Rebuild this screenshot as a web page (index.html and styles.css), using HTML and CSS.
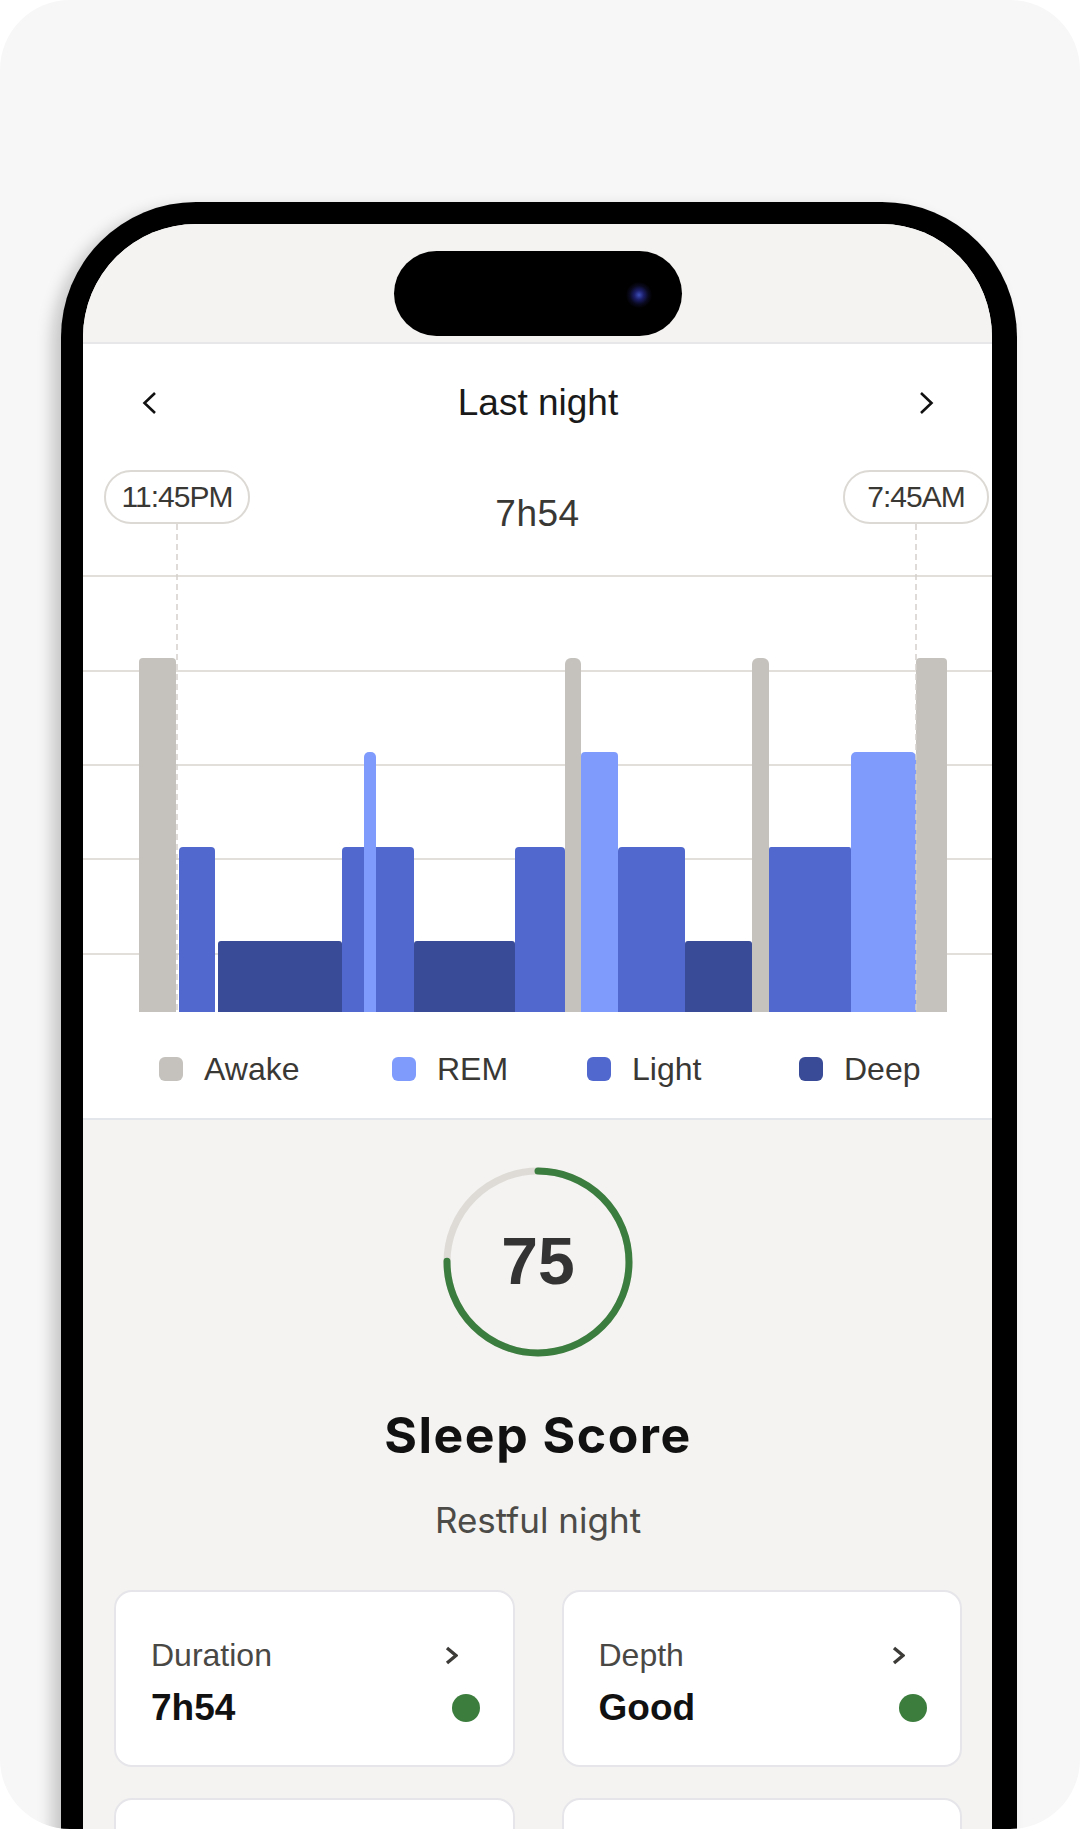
FILE: index.html
```html
<!DOCTYPE html>
<html lang="en">
<head>
    <meta charset="UTF-8">
    <meta name="viewport" content="width=device-width, initial-scale=1.0">
    <title>Sleep - Last night</title>
    <link rel="stylesheet" href="styles.css">
</head>
<body>
    <div class="page">
        <div class="phone">
            <div class="status-bar">
                <div class="island"><span class="camera"></span></div>
            </div>

            <section class="night">
                <div class="nav">
                    <svg class="nav-arrow" width="15" height="24" viewBox="0 0 15 24"><path d="M13 2 L2.5 12 L13 22"/></svg>
                    <h1 class="nav-title">Last night</h1>
                    <svg class="nav-arrow" width="15" height="24" viewBox="0 0 15 24"><path d="M2 2 L12.5 12 L2 22"/></svg>
                </div>

                <div class="times">
                    <span class="time-pill time-start">11:45PM</span>
                    <span class="total">7h54</span>
                    <span class="time-pill time-end">7:45AM</span>
                </div>

                <!-- hypnogram: levels awake / rem / light / deep -->
                <svg class="hypnogram" width="909" height="496" viewBox="0 0 909 496">
                    <defs>
                        <clipPath id="plot"><rect x="0" y="0" width="909" height="488"/></clipPath>
                    </defs>
                    <g class="grid-lines">
                        <line x1="0" y1="52" x2="909" y2="52"/>
                        <line x1="0" y1="147" x2="909" y2="147"/>
                        <line x1="0" y1="241" x2="909" y2="241"/>
                        <line x1="0" y1="335" x2="909" y2="335"/>
                        <line x1="0" y1="430" x2="909" y2="430"/>
                    </g>
                    <g clip-path="url(#plot)">
                        <rect class="bar-awake" x="56" y="134" width="37" height="360" rx="4"/>
                        <rect class="bar-light" x="96" y="323" width="36" height="171" rx="4"/>
                        <rect class="bar-deep" x="135" y="417" width="124" height="77" rx="3"/>
                        <rect class="bar-light" x="259" y="323" width="72" height="171" rx="4"/>
                        <rect class="bar-rem" x="281" y="228" width="12" height="266" rx="5"/>
                        <rect class="bar-deep" x="331" y="417" width="101" height="77" rx="3"/>
                        <rect class="bar-light" x="432" y="323" width="50" height="171" rx="4"/>
                        <rect class="bar-awake" x="482" y="134" width="16" height="360" rx="6"/>
                        <rect class="bar-rem" x="498" y="228" width="37" height="266" rx="4"/>
                        <rect class="bar-light" x="535" y="323" width="67" height="171" rx="4"/>
                        <rect class="bar-deep" x="602" y="417" width="67" height="77" rx="3"/>
                        <rect class="bar-awake" x="669" y="134" width="17" height="360" rx="6"/>
                        <rect class="bar-light" x="686" y="323" width="82" height="171" rx="2"/>
                        <rect class="bar-rem" x="768" y="228" width="65" height="266" rx="5"/>
                        <rect class="bar-awake" x="833" y="134" width="31" height="360" rx="4"/>
                    </g>
                    <g class="time-marks">
                        <line x1="94" y1="0" x2="94" y2="488"/>
                        <line x1="833" y1="0" x2="833" y2="488"/>
                    </g>
                </svg>

                <div class="legend">
                    <div class="legend-item"><span class="swatch swatch-awake"></span>Awake</div>
                    <div class="legend-item"><span class="swatch swatch-rem"></span>REM</div>
                    <div class="legend-item"><span class="swatch swatch-light"></span>Light</div>
                    <div class="legend-item"><span class="swatch swatch-deep"></span>Deep</div>
                </div>
            </section>

            <section class="score">
                <div class="ring-wrap">
                    <svg class="ring" width="190" height="190" viewBox="0 0 190 190">
                        <circle class="ring-track" cx="95" cy="95" r="91"/>
                        <circle class="ring-fill" cx="95" cy="95" r="91" stroke-dasharray="428.8 571.8" transform="rotate(-90 95 95)"/>
                    </svg>
                    <span class="ring-value">75</span>
                </div>
                <h2 class="score-title">Sleep Score</h2>
                <p class="score-sub">Restful night</p>

                <div class="cards">
                    <div class="card">
                        <div class="card-row">
                            <span class="card-label">Duration</span>
                            <svg class="card-arrow" width="13" height="19" viewBox="0 0 13 19"><path d="M2 2 L11 9.5 L2 17"/></svg>
                        </div>
                        <div class="card-row card-row-value">
                            <span class="card-value">7h54</span>
                            <span class="dot"></span>
                        </div>
                    </div>
                    <div class="card">
                        <div class="card-row">
                            <span class="card-label">Depth</span>
                            <svg class="card-arrow" width="13" height="19" viewBox="0 0 13 19"><path d="M2 2 L11 9.5 L2 17"/></svg>
                        </div>
                        <div class="card-row card-row-value">
                            <span class="card-value">Good</span>
                            <span class="dot"></span>
                        </div>
                    </div>
                    <div class="card"></div>
                    <div class="card"></div>
                </div>
            </section>
        </div>
    </div>
</body>
</html>
```

FILE: styles.css
```css
* {
    box-sizing: border-box;
}
body {
    margin: 0;
    background: #fff;
    font-family: "Liberation Sans", Arial, sans-serif;
    color: #3a3835;
}
.page {
    width: 1080px;
    height: 1829px;
    padding-top: 202px;
    background: #f7f7f7;
    border-radius: 70px;
    overflow: hidden;
}
.phone {
    width: 956px;
    margin-left: 61px;
    border: 22px solid #000;
    border-right-width: 25px;
    border-bottom: none;
    border-radius: 135px 135px 0 0;
    overflow: hidden;
    background: #f4f3f1;
    box-shadow: -9px 6px 16px rgba(0, 0, 0, 0.2);
}
.status-bar {
    height: 120px;
    padding-top: 27px;
    background: #f4f3f1;
    border-bottom: 2px solid #e7e7e9;
}
.island {
    width: 288px;
    height: 85px;
    margin: 0 auto;
    border-radius: 43px;
    background: #000;
    display: flex;
    align-items: center;
    justify-content: flex-end;
    padding-right: 30px;
}
.camera {
    width: 26px;
    height: 26px;
    border-radius: 50%;
    margin-top: 3px;
    background: radial-gradient(circle, #3d4fb8 0, #1c1f6a 25%, #0a0a20 50%, #000 72%);
}

/* night chart */
.night {
    background: #fff;
    border-bottom: 2px solid #e3e6ea;
}
.nav {
    display: flex;
    align-items: center;
    justify-content: space-between;
    height: 79px;
    padding: 38px 58px 0 59px;
}
.nav-arrow path {
    fill: none;
    stroke: #111;
    stroke-width: 2.6;
}
.nav-title {
    margin: 0;
    font-size: 37px;
    font-weight: 400;
    color: #1a1a1a;
}
.times {
    display: grid;
    grid-template-columns: 1fr auto 1fr;
    grid-template-rows: 54px;
    margin-top: 47px;
}
.time-pill {
    width: 146px;
    height: 54px;
    border: 2px solid #dcd9d4;
    border-radius: 27px;
    background: #fff;
    display: flex;
    align-items: center;
    justify-content: center;
    font-size: 30px;
    letter-spacing: -1px;
    color: #3a3835;
}
.time-start {
    justify-self: start;
    margin-left: 21px;
}
.time-end {
    justify-self: end;
    margin-right: 3px;
}
.total {
    align-self: start;
    margin-top: 23px;
    font-size: 37px;
    letter-spacing: 0.5px;
    color: #3a3835;
}
.hypnogram {
    display: block;
}
.grid-lines line {
    stroke: #e2dfda;
    stroke-width: 2;
}
.time-marks line {
    stroke: #d3d0cb;
    stroke-width: 1.5;
    stroke-dasharray: 6 4;
}
.bar-awake { fill: #c5c2bd; }
.bar-rem { fill: #7f9cfd; }
.bar-light { fill: #5169ce; }
.bar-deep { fill: #394a97; }

.legend {
    height: 98px;
    display: grid;
    grid-template-columns: 233px 195px 212px auto;
    align-items: center;
    padding-left: 76px;
}
.legend-item {
    display: flex;
    align-items: center;
    gap: 21px;
    font-size: 32px;
    color: #3a3835;
}
.swatch {
    width: 24px;
    height: 24px;
    border-radius: 6px;
}
.swatch-awake { background: #c5c2bd; }
.swatch-rem { background: #7f9cfd; }
.swatch-light { background: #5169ce; }
.swatch-deep { background: #394a97; }

/* score */
.score {
    padding: 47px 30px 0 31px;
    text-align: center;
}
.ring-wrap {
    width: 190px;
    height: 190px;
    margin: 0 auto;
    display: grid;
    place-items: center;
}
.ring,
.ring-value {
    grid-area: 1 / 1;
}
.ring-track {
    fill: none;
    stroke: #dedbd6;
    stroke-width: 7;
}
.ring-fill {
    fill: none;
    stroke: #3b7d3e;
    stroke-width: 7;
    stroke-linecap: round;
}
.ring-value {
    font-size: 66px;
    font-weight: 700;
    color: #333;
    line-height: 1;
    margin-top: -3px;
}
.score-title {
    margin: 48px 0 0;
    font-family: Inter, "Liberation Sans", sans-serif;
    font-size: 50px;
    font-weight: 700;
    letter-spacing: 1.5px;
    color: #111;
}
.score-sub {
    margin: 34px 0 0;
    font-family: Inter, "Liberation Sans", sans-serif;
    font-size: 35px;
    color: #4d4b48;
}
.cards {
    display: grid;
    grid-template-columns: 1fr 1fr;
    column-gap: 47px;
    row-gap: 31px;
    margin-top: 49px;
    text-align: left;
}
.card {
    height: 177px;
    padding: 45px 33px 36px 35px;
    background: #fff;
    border: 2px solid #e6e6ea;
    border-radius: 18px;
}
.card-row {
    display: flex;
    align-items: center;
    justify-content: space-between;
}
.card-row-value {
    margin-top: 13px;
}
.card-label {
    font-size: 32px;
    color: #4a4845;
}
.card-arrow {
    margin-right: 22px;
}
.card-arrow path {
    fill: none;
    stroke: #3d3b38;
    stroke-width: 3.4;
}
.card-value {
    font-size: 37px;
    font-weight: 700;
    color: #111;
}
.dot {
    width: 28px;
    height: 28px;
    border-radius: 50%;
    background: #3c7d3e;
}
```
